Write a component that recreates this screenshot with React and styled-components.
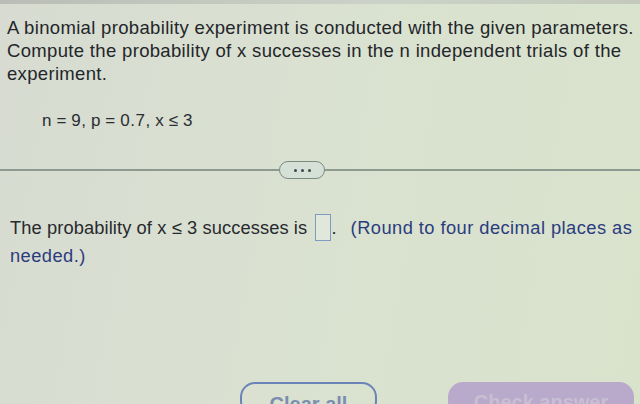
import React from "react";
import styled, { createGlobalStyle } from "styled-components";

const Global = createGlobalStyle`
  html, body { margin: 0; padding: 0; }
  body {
    width: 640px;
    height: 404px;
    overflow: hidden;
    font-family: "Liberation Sans", Arial, sans-serif;
  }
`;

const Screen = styled.div`
  position: relative;
  width: 640px;
  height: 404px;
  overflow: hidden;
  background: linear-gradient(100deg, #d7dbd1 0%, #dae1d1 45%, #d9e3cc 100%);
  display: flex;
  flex-direction: column;
`;

const Bezel = styled.div`
  height: 4px;
  background: linear-gradient(90deg, #b9bdb5, #cdd2c8 60%, #c3c9bc);
`;

const Question = styled.div`
  padding: 12px 0 0 7px;
  color: #23262a;
  font-size: 18.5px;
  line-height: 23px;
  letter-spacing: 0.33px;
`;

const Params = styled.div`
  padding: 26px 0 0 42px;
  color: #2a2d31;
  font-size: 17px;
  letter-spacing: 0.6px;
  word-spacing: -1px;
`;

const DividerRow = styled.div`
  margin-top: 29px;
  height: 20px;
  display: flex;
  align-items: center;
`;

const Line = styled.div`
  flex: ${(p) => (p.w ? "none" : "1")};
  width: ${(p) => (p.w ? `${p.w}px` : "auto")};
  height: 2px;
  background: #8d9a8f;
`;

const Pill = styled.div`
  width: 44px;
  height: 16px;
  border: 1.5px solid #7d8a82;
  border-radius: 9px;
  background: #d5e0d6;
  display: flex;
  align-items: center;
  justify-content: center;
  gap: 4px;
`;

const Dot = styled.span`
  width: 3px;
  height: 3px;
  border-radius: 50%;
  background: #3b4652;
`;

const Answer = styled.div`
  padding: 34px 0 0 10px;
  color: #272a2e;
  font-size: 18.3px;
  line-height: 28px;
  letter-spacing: 0.1px;
`;

const Box = styled.span`
  display: inline-block;
  width: 14px;
  height: 25px;
  border: 1.5px solid #7e9cc0;
  vertical-align: -7px;
  margin-left: 3px;
  background: #dfe8db;
`;

const Hint = styled.span`
  color: #2b3c7e;
  letter-spacing: 0.45px;
  margin-left: ${(p) => (p.gap ? "14px" : "0")};
`;

const Buttons = styled.div`
  margin-top: auto;
  height: 22px;
  display: flex;
  align-items: flex-start;
  padding-left: 240px;
  gap: 71px;
`;

const Button = styled.div`
  height: 34px;
  width: ${(p) => p.w}px;
  border-radius: 15px;
  box-sizing: border-box;
  display: flex;
  justify-content: center;
  padding-top: 9px;
  font-size: 20px;
  font-weight: bold;
  white-space: nowrap;
  border: ${(p) => (p.filled ? "none" : "2px solid #6b84b8")};
  background: ${(p) => (p.filled ? "#b9a9ca" : "transparent")};
  color: ${(p) => (p.filled ? "#c8bfd4" : "#7b8eb0")};
`;

export default function App() {
  return (
    <Screen>
      <Global />
      <Bezel />
      <Question>
        A binomial probability experiment is conducted with the given parameters.
        <br />
        Compute the probability of x successes in the n independent trials of the
        <br />
        experiment.
      </Question>
      <Params>n = 9, p = 0.7, x ≤ 3</Params>
      <DividerRow>
        <Line w={279} />
        <Pill>
          <Dot />
          <Dot />
          <Dot />
        </Pill>
        <Line />
      </DividerRow>
      <Answer>
        The probability of x ≤ 3 successes is <Box />.
        <Hint gap>(Round to four decimal places as</Hint>
        <br />
        <Hint>needed.)</Hint>
      </Answer>
      <Buttons>
        <Button w={137}>Clear all</Button>
        <Button w={186} filled>
          Check answer
        </Button>
      </Buttons>
    </Screen>
  );
}
